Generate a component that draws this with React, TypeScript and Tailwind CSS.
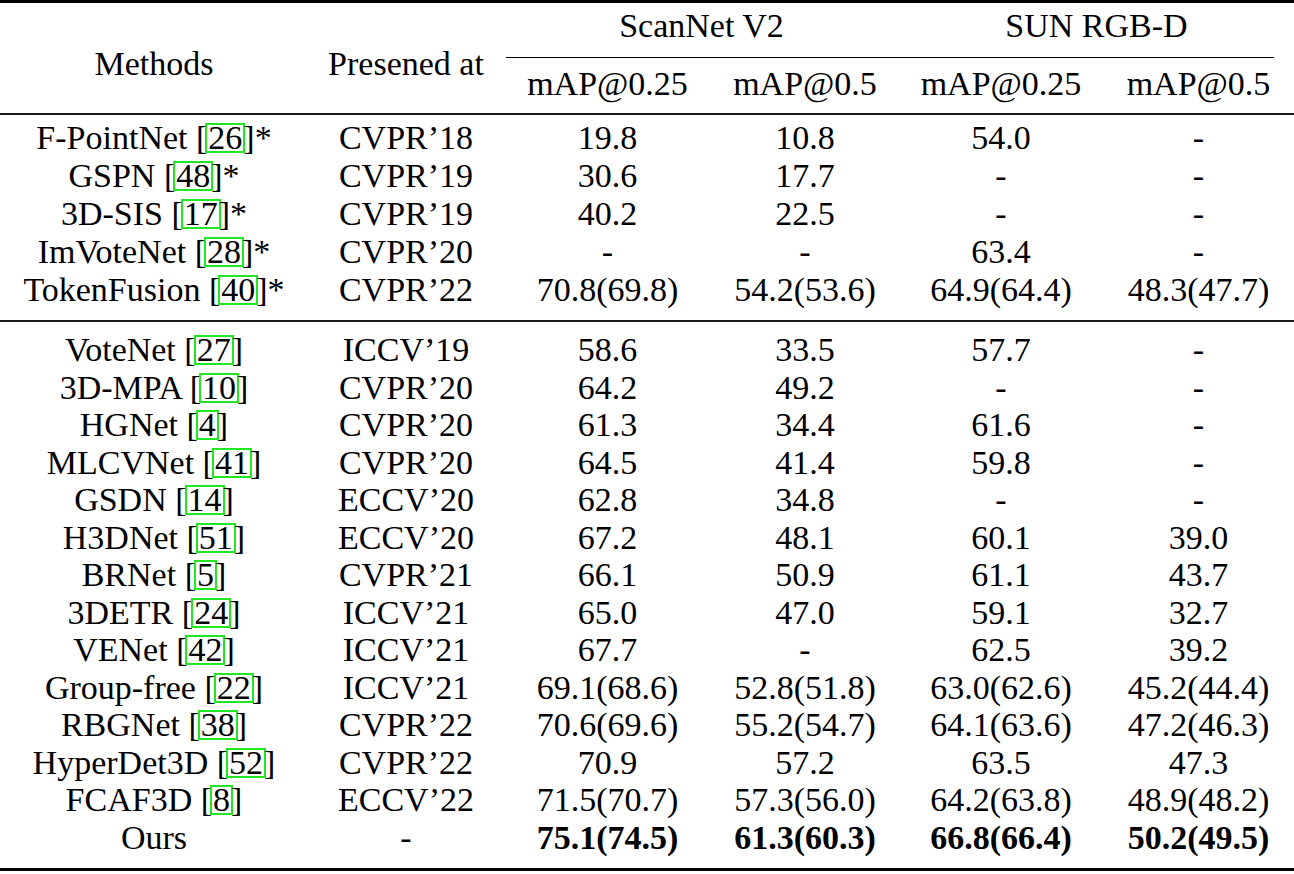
type Row = {
  name: string;
  cite: string;
  star?: boolean;
  venue: string;
  vals: string[];
  bold?: boolean;
};

const groupA: Row[] = [
  { name: "F-PointNet", cite: "26", star: true, venue: "CVPR’18", vals: ["19.8", "10.8", "54.0", "-"] },
  { name: "GSPN", cite: "48", star: true, venue: "CVPR’19", vals: ["30.6", "17.7", "-", "-"] },
  { name: "3D-SIS", cite: "17", star: true, venue: "CVPR’19", vals: ["40.2", "22.5", "-", "-"] },
  { name: "ImVoteNet", cite: "28", star: true, venue: "CVPR’20", vals: ["-", "-", "63.4", "-"] },
  {
    name: "TokenFusion",
    cite: "40",
    star: true,
    venue: "CVPR’22",
    vals: ["70.8(69.8)", "54.2(53.6)", "64.9(64.4)", "48.3(47.7)"],
  },
];

const groupB: Row[] = [
  { name: "VoteNet", cite: "27", venue: "ICCV’19", vals: ["58.6", "33.5", "57.7", "-"] },
  { name: "3D-MPA", cite: "10", venue: "CVPR’20", vals: ["64.2", "49.2", "-", "-"] },
  { name: "HGNet", cite: "4", venue: "CVPR’20", vals: ["61.3", "34.4", "61.6", "-"] },
  { name: "MLCVNet", cite: "41", venue: "CVPR’20", vals: ["64.5", "41.4", "59.8", "-"] },
  { name: "GSDN", cite: "14", venue: "ECCV’20", vals: ["62.8", "34.8", "-", "-"] },
  { name: "H3DNet", cite: "51", venue: "ECCV’20", vals: ["67.2", "48.1", "60.1", "39.0"] },
  { name: "BRNet", cite: "5", venue: "CVPR’21", vals: ["66.1", "50.9", "61.1", "43.7"] },
  { name: "3DETR", cite: "24", venue: "ICCV’21", vals: ["65.0", "47.0", "59.1", "32.7"] },
  { name: "VENet", cite: "42", venue: "ICCV’21", vals: ["67.7", "-", "62.5", "39.2"] },
  {
    name: "Group-free",
    cite: "22",
    venue: "ICCV’21",
    vals: ["69.1(68.6)", "52.8(51.8)", "63.0(62.6)", "45.2(44.4)"],
  },
  {
    name: "RBGNet",
    cite: "38",
    venue: "CVPR’22",
    vals: ["70.6(69.6)", "55.2(54.7)", "64.1(63.6)", "47.2(46.3)"],
  },
  { name: "HyperDet3D", cite: "52", venue: "CVPR’22", vals: ["70.9", "57.2", "63.5", "47.3"] },
  {
    name: "FCAF3D",
    cite: "8",
    venue: "ECCV’22",
    vals: ["71.5(70.7)", "57.3(56.0)", "64.2(63.8)", "48.9(48.2)"],
  },
  {
    name: "Ours",
    cite: "",
    venue: "-",
    vals: ["75.1(74.5)", "61.3(60.3)", "66.8(66.4)", "50.2(49.5)"],
    bold: true,
  },
];

const cols = "grid grid-cols-[308px_196px_207px_188px_204px_191px]";

function Cite({ n }: { n: string }) {
  // hyperref-style green link box around the citation number
  return (
    <span>
      [
      <span className="inline-block border-2 border-[#22e622] leading-[26px] px-[1px] -mx-[2px]">{n}</span>
      ]
    </span>
  );
}

function TableRow({ row, tall }: { row: Row; tall?: boolean }) {
  return (
    <div
      className={`${cols} ${
        tall ? "h-[38px] leading-[38px]" : "h-[37.5px] leading-[37.5px]"
      } text-center whitespace-nowrap`}
    >
      <div>
        {row.name}
        {row.cite && (
          <>
            {" "}
            <Cite n={row.cite} />
          </>
        )}
        {row.star && "*"}
      </div>
      <div>{row.venue}</div>
      {row.vals.map((v, i) => (
        <div key={i} className={row.bold ? "font-bold" : ""}>
          {v}
        </div>
      ))}
    </div>
  );
}

export default function App() {
  return (
    <div className="w-[1294px] h-[874px] bg-white text-black font-['Liberation_Serif','Times_New_Roman',serif] text-[34px] overflow-hidden">
      {/* toprule */}
      <div className="h-[3px] bg-black" />

      {/* header */}
      <div className={`${cols} grid-rows-[54px_1px_55px] leading-[37.5px] text-center whitespace-nowrap`}>
        <div className="col-start-1 row-start-1 row-span-3 pt-[42px]">Methods</div>
        <div className="col-start-2 row-start-1 row-span-3 pt-[42px]">Presened at</div>
        <div className="col-start-3 col-span-2 row-start-1 pt-[4px]">ScanNet V2</div>
        <div className="col-start-5 col-span-2 row-start-1 pt-[4px]">SUN RGB-D</div>
        <div className="col-start-3 col-span-4 row-start-2 ml-[2px] mr-[20px] bg-black" />
        <div className="col-start-3 row-start-3 pt-[7px]">mAP@0.25</div>
        <div className="col-start-4 row-start-3 pt-[7px]">mAP@0.5</div>
        <div className="col-start-5 row-start-3 pt-[7px]">mAP@0.25</div>
        <div className="col-start-6 row-start-3 pt-[7px]">mAP@0.5</div>
      </div>

      {/* midrule */}
      <div className="h-[2px] bg-[#1a1a1a]" />

      <div className="pt-[4px] pb-[11px]">
        {groupA.map((r) => (
          <TableRow key={r.name} row={r} tall />
        ))}
      </div>

      <div className="h-[2px] bg-[#1a1a1a]" />

      <div className="pt-[9px] pb-[12px]">
        {groupB.map((r) => (
          <TableRow key={r.name} row={r} />
        ))}
      </div>

      {/* bottomrule */}
      <div className="h-[3px] bg-black" />
    </div>
  );
}
